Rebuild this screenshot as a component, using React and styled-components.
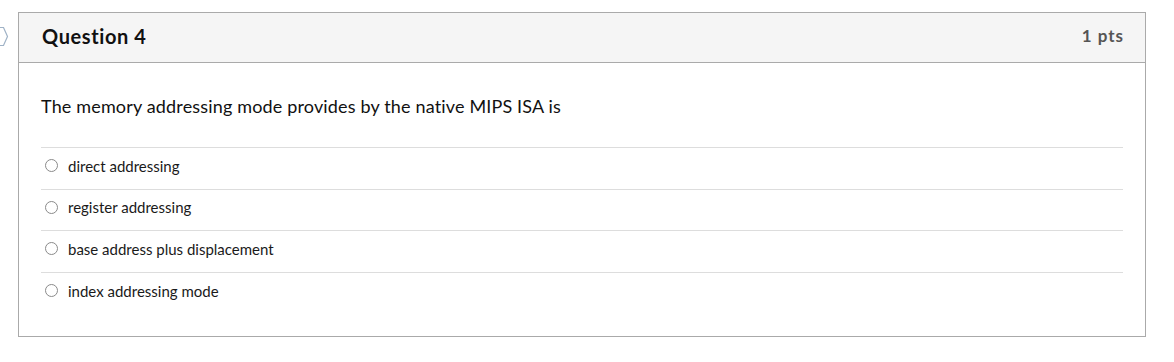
import React from "react";
import styled, { createGlobalStyle } from "styled-components";

const Global = createGlobalStyle`
  html, body { margin: 0; padding: 0; background: #fff; }
  body { font-family: Lato, "Noto Sans", sans-serif; color: #111; }
`;

const Page = styled.div`
  padding: 12px 0 0 18px;
  position: relative;
`;

const Bookmark = styled.svg`
  position: absolute;
  left: 0;
  top: 27px;
`;

const Card = styled.div`
  width: 1126px;
  border: 1px solid #aaaaaa;
  background: #fff;
`;

const Header = styled.div`
  height: 50px;
  display: flex;
  align-items: center;
  justify-content: space-between;
  padding: 0 21px 4px 23px;
  box-sizing: border-box;
  background: #f5f5f5;
  border-bottom: 1px solid #aaaaaa;
`;

const Title = styled.div`
  font-size: 20px;
  font-weight: 700;
  color: #111;
  letter-spacing: 0.6px;
`;

const Points = styled.div`
  font-size: 17px;
  font-weight: 700;
  color: #555;
  letter-spacing: 1px;
`;

const Body = styled.div`
  padding: 31px 22px 22px 22px;
`;

const Prompt = styled.div`
  font-size: 18px;
  line-height: 24px;
  letter-spacing: 0.16px;
  color: #111;
  margin-bottom: 29px;
`;

const Answers = styled.div`
  display: flex;
  flex-direction: column;
`;

const Answer = styled.label`
  display: flex;
  align-items: center;
  padding: 0 0 6px 4px;
  box-sizing: border-box;
  border-top: 1px solid #dddddd;
  font-size: 15px;
  color: #1a1a1a;
  height: ${(p) => p.h}px;
`;

const Radio = styled.span`
  width: 13px;
  height: 13px;
  box-sizing: border-box;
  border: 1px solid #8a8a8a;
  border-radius: 50%;
  margin-right: 10px;
  flex: none;
  background: #fff;
`;

const options = [
  ["direct addressing", 42],
  ["register addressing", 41],
  ["base address plus displacement", 42],
  ["index addressing mode", 42],
];

export default function App() {
  return (
    <>
      <Global />
      <Page>
        <Bookmark width="9" height="20" viewBox="0 0 9 20">
          <path d="M-1 0.5 H3.5 L7.5 9.5 L3.5 18.5 H-1" fill="none" stroke="#9fb2c6" strokeWidth="1.2" />
        </Bookmark>
        <Card>
          <Header>
            <Title>Question 4</Title>
            <Points>1 pts</Points>
          </Header>
          <Body>
            <Prompt>The memory addressing mode provides by the native MIPS ISA is</Prompt>
            <Answers>
              {options.map(([t, h]) => (
                <Answer key={t} h={h}>
                  <Radio />
                  {t}
                </Answer>
              ))}
            </Answers>
          </Body>
        </Card>
      </Page>
    </>
  );
}
